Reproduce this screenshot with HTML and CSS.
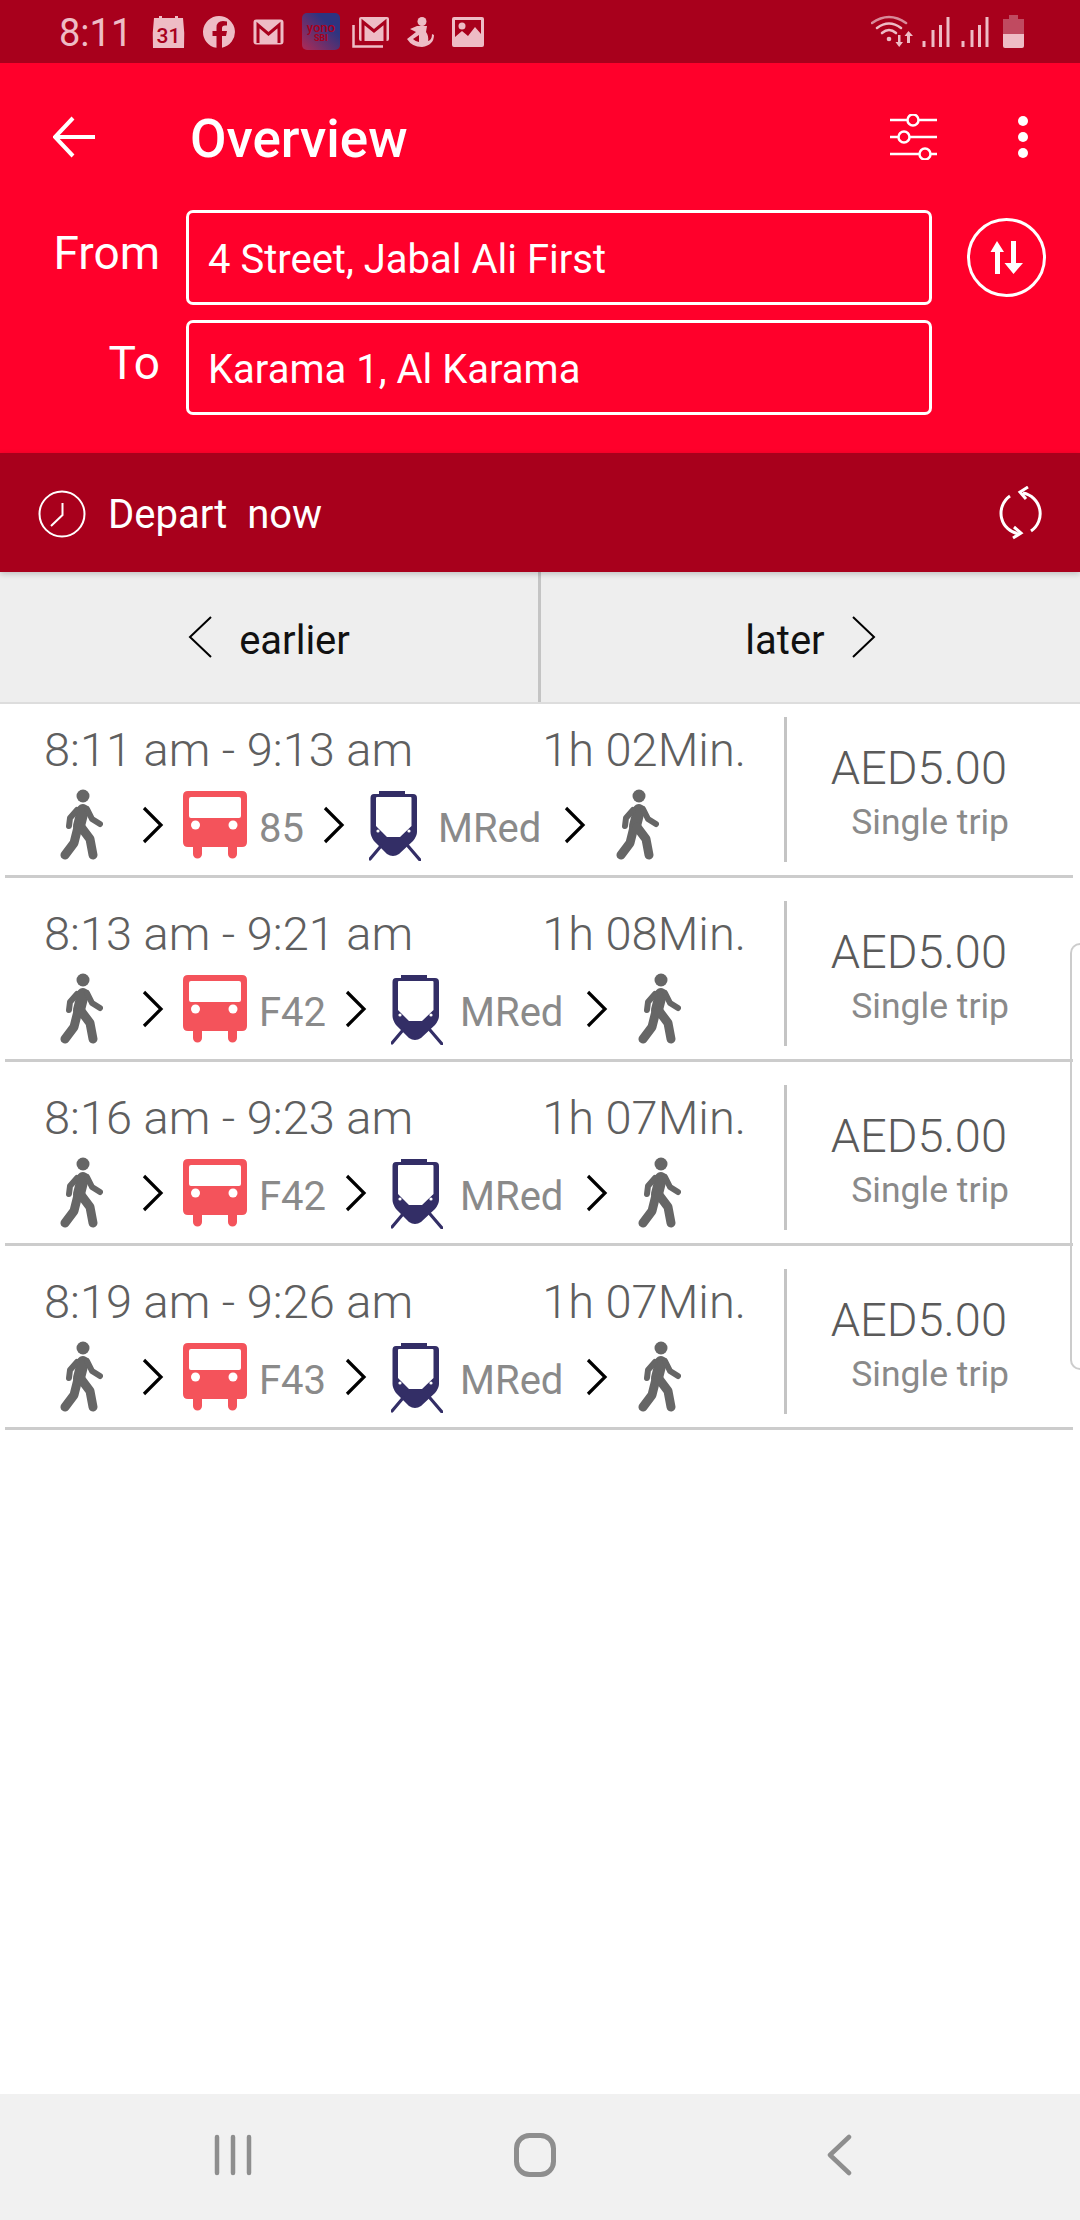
FILE: index.html
```html
<!DOCTYPE html>
<html lang="en">
<head>
    <meta charset="UTF-8">
    <meta name="viewport" content="width=device-width, initial-scale=1.0">
    <title>Overview</title>
    <link rel="stylesheet" href="styles.css">
</head>
<body>
    <!-- Shared icons -->
    <svg class="icon-defs" xmlns="http://www.w3.org/2000/svg">
        <symbol id="walk" viewBox="0 0 44 72">
            <circle cx="23" cy="7" r="6.5" fill="#666"/>
            <g fill="none" stroke="#666" stroke-linecap="round" stroke-linejoin="round">
                <path d="M23 21 L19 37" stroke-width="12"/>
                <path d="M17 21 L10 29 L9 37" stroke-width="6"/>
                <path d="M27 20 L32 30 L40 35" stroke-width="6"/>
                <path d="M18 38 L14 54 L5 66" stroke-width="9"/>
                <path d="M21 38 L30 50 L33 66" stroke-width="9"/>
            </g>
        </symbol>
        <symbol id="bus" viewBox="0 0 64 68">
            <path fill="#f4535b" fill-rule="evenodd" d="M5 0 H59 Q64 0 64 5 V51 Q64 56 59 56 H54 V63 A4.5 4.5 0 0 1 45 63 V56 H19 V63 A4.5 4.5 0 0 1 10 63 V56 H5 Q0 56 0 51 V5 Q0 0 5 0 Z M8 6 Q6 6 6 8 V25 Q6 27 8 27 H56 Q58 27 58 25 V8 Q58 6 56 6 Z"/>
            <circle cx="12.5" cy="34" r="4.5" fill="#fff"/>
            <circle cx="50" cy="34" r="4.5" fill="#fff"/>
        </symbol>
        <symbol id="train" viewBox="0 0 52 72">
            <rect x="10" y="2" width="26" height="4" fill="#332e66"/>
            <path fill="#332e66" fill-rule="evenodd" d="M1.5 9 Q1.5 5 5 5 H44 Q48 5 48 9 V43 Q48 47 44 52 L30 65 Q24 69 18 65 L5 52 Q1.5 47 1.5 43 Z M7 9 Q7 8 8 8 H41.5 Q42.5 8 42.5 9 V37 L31 48 H18 L7 37 Z"/>
            <circle cx="9" cy="42" r="1.6" fill="#fff"/>
            <circle cx="40" cy="42" r="1.6" fill="#fff"/>
            <path d="M1 70 L12 57 M51 71 L39 57" stroke="#332e66" stroke-width="3.2" stroke-linecap="round"/>
        </symbol>
        <symbol id="chev" viewBox="0 0 22 38">
            <path d="M2 2 L19 19 L2 36" fill="none" stroke="#000" stroke-width="3.2"/>
        </symbol>
    </svg>

    <div class="status-bar">
        <span class="status-time">8:11</span>
        <div class="status-icons">
            <svg width="33" height="34" viewBox="0 0 33 34"><path fill="#eebcc5" d="M2 3 H7 V1 H10 V3 H23 V1 H26 V3 H31 Q33 18 32 33 H1 Q0 18 2 3 Z"/><text x="16.5" y="28" class="cal-num">31</text></svg>
            <svg width="32" height="32" viewBox="0 0 32 32"><path fill="#eebcc5" d="M16 0 A16 16 0 0 1 19 31.7 V20 H23 L24 15 H19 V12 Q19 9.5 22 9.5 H24 V5.5 Q22 5 20 5 Q13.5 5 13.5 11.5 V15 H9.5 V20 H13.5 V31.8 A16 16 0 0 1 16 0 Z"/></svg>
            <svg width="31" height="26" viewBox="0 0 31 26"><rect x="1.5" y="1.5" width="28" height="23" rx="2" fill="#eebcc5" stroke="#eebcc5" stroke-width="2"/><path d="M5 24 V6 L15.5 15 L26 6 V24" fill="none" stroke="#a8001c" stroke-width="3"/></svg>
            <div class="yono"><span class="yono-name">yono</span><span class="yono-sbi">SBI</span></div>
            <svg class="gmail-stack" width="37" height="32" viewBox="0 0 37 32"><path d="M1.5 9 V30.5 H31" fill="none" stroke="#eebcc5" stroke-width="2.5"/><rect x="7" y="1" width="30" height="24" rx="2" fill="#eebcc5"/><path d="M11 25 V6 L22 15 L33 6 V25" fill="none" stroke="#a8001c" stroke-width="3"/></svg>
            <svg width="27" height="30" viewBox="0 0 27 30"><circle cx="15" cy="4.5" r="4.5" fill="#eebcc5"/><path fill="#eebcc5" d="M10 9 H20 L19 15 Q22 19 21 24 Q25 23 25 17 L27 18 Q27 28 15 30 Q5 30 0 22 L9 15 L3 12 Z M6 22 Q9 25 12 25 L12 18 Z"/></svg>
            <svg width="32" height="30" viewBox="0 0 32 30"><path fill="#eebcc5" fill-rule="evenodd" d="M2 0 H30 Q32 0 32 2 V28 Q32 30 30 30 H2 Q0 30 0 28 V2 Q0 0 2 0 Z M3 3 V20 L10 14 L16 19 L23 10 L29 17 V3 Z"/><circle cx="10" cy="9" r="3.5" fill="#eebcc5"/></svg>
        </div>
        <div class="status-right">
            <svg width="43" height="33" viewBox="0 0 43 33">
                <g fill="none" stroke-width="2.6" stroke-linecap="round">
                    <path d="M1 8 Q18 -4 35 8" stroke="#d88a99"/>
                    <path d="M6 13 Q18 4 30 13" stroke="#eebcc5"/>
                    <path d="M11 18 Q18 12 25 18" stroke="#eebcc5"/>
                </g>
                <circle cx="18" cy="24" r="2.3" fill="#eebcc5"/>
                <path fill="#eebcc5" d="M27 20 H29.5 V27 H32 L28.2 32 L24.5 27 H27 Z M36 28 V21 H33.5 L37.5 16 L42 21 H39 V28 Z"/>
            </svg>
            <svg class="signal" width="28" height="30" viewBox="0 0 28 30"><path d="M2 30 V24 M11 30 V13 M18.5 30 V8 M26 30 V0" stroke="#eebcc5" stroke-width="3"/></svg>
            <svg class="signal" width="28" height="30" viewBox="0 0 28 30"><path d="M2 30 V24 M11 30 V13 M18.5 30 V8 M26 30 V0" stroke="#eebcc5" stroke-width="3"/></svg>
            <svg class="battery" width="21" height="33" viewBox="0 0 21 33"><path fill="#c04a60" d="M6 0 H15 V4 H21 V20 H0 V4 H6 Z"/><path fill="#eebcc5" d="M0 19 H21 V31 Q21 33 19 33 H2 Q0 33 0 31 Z"/></svg>
        </div>
    </div>

    <div class="header">
        <div class="header-top">
            <svg class="back-arrow" width="42" height="42" viewBox="0 0 42 42"><path d="M20 2 L2 21 L20 40 M2 21 H42" fill="none" stroke="#fff" stroke-width="4"/></svg>
            <h1 class="title">Overview</h1>
            <svg class="sliders" width="47" height="46" viewBox="0 0 47 46">
                <path d="M0 6 H47 M0 23 H47 M0 40 H47" stroke="#fff" stroke-width="2.5"/>
                <g fill="#ff002b" stroke="#fff" stroke-width="2.5">
                    <circle cx="23" cy="6" r="5.5"/>
                    <circle cx="14" cy="23" r="5.5"/>
                    <circle cx="35" cy="40" r="5.5"/>
                </g>
            </svg>
            <svg class="more" width="10" height="42" viewBox="0 0 10 42"><circle cx="5" cy="5" r="5" fill="#fff"/><circle cx="5" cy="21" r="5" fill="#fff"/><circle cx="5" cy="37" r="5" fill="#fff"/></svg>
        </div>
        <div class="route">
            <div class="route-fields">
                <div class="route-row">
                    <span class="route-label">From</span>
                    <div class="route-input">4 Street, Jabal Ali First</div>
                </div>
                <div class="route-row">
                    <span class="route-label">To</span>
                    <div class="route-input">Karama 1, Al Karama</div>
                </div>
            </div>
            <div class="swap">
                <svg width="34" height="34" viewBox="0 0 34 34"><path fill="#fff" d="M7 0 L14 11 H10 V33 H5 V11 H0.5 Z M21 0 H26 V22 H33 L23.5 33 L14.5 22 H21 Z"/></svg>
            </div>
        </div>
    </div>

    <div class="depart-bar">
        <svg class="clock" width="48" height="48" viewBox="0 0 48 48"><circle cx="24" cy="24" r="22.5" fill="none" stroke="#fff" stroke-width="2"/><path d="M24.5 13 V25 L13 36" fill="none" stroke="#fff" stroke-width="2"/></svg>
        <span class="depart-text">Depart&nbsp; now</span>
        <svg class="refresh" width="46" height="54" viewBox="0 -3 46 54">
            <path d="M11 7 A21 21 0 0 0 20 45 M32 42 A21 21 0 0 0 24 4" fill="none" stroke="#fff" stroke-width="3"/>
            <path d="M15 38 L22 44 L14 49 M29 -2 L21 3 L27 10" fill="none" stroke="#fff" stroke-width="3"/>
        </svg>
    </div>

    <div class="tabs">
        <div class="tab">
            <svg class="tab-chev" width="25" height="42" viewBox="0 0 25 42"><path d="M23 1 L2 21 L23 41" fill="none" stroke="#000" stroke-width="2"/></svg>
            <span>earlier</span>
        </div>
        <div class="tab">
            <span>later</span>
            <svg class="tab-chev" width="25" height="42" viewBox="0 0 25 42"><path d="M2 1 L23 21 L2 41" fill="none" stroke="#000" stroke-width="2"/></svg>
        </div>
    </div>

    <div class="trips">
        <div class="trip">
            <div class="trip-main">
                <div class="trip-times">
                    <span>8:11 am - 9:13 am</span>
                    <span>1h 02Min.</span>
                </div>
                <div class="trip-legs">
                    <svg class="walk"><use href="#walk"/></svg>
                    <svg class="chev"><use href="#chev"/></svg>
                    <svg class="bus"><use href="#bus"/></svg>
                    <span class="line-name">85</span>
                    <svg class="chev"><use href="#chev"/></svg>
                    <svg class="train"><use href="#train"/></svg>
                    <span class="line-name">MRed</span>
                    <svg class="chev"><use href="#chev"/></svg>
                    <svg class="walk"><use href="#walk"/></svg>
                </div>
            </div>
            <div class="trip-fare">
                <span class="fare-price">AED5.00</span>
                <span class="fare-type">Single trip</span>
            </div>
        </div>
        <div class="trip">
            <div class="trip-main">
                <div class="trip-times">
                    <span>8:13 am - 9:21 am</span>
                    <span>1h 08Min.</span>
                </div>
                <div class="trip-legs">
                    <svg class="walk"><use href="#walk"/></svg>
                    <svg class="chev"><use href="#chev"/></svg>
                    <svg class="bus"><use href="#bus"/></svg>
                    <span class="line-name">F42</span>
                    <svg class="chev"><use href="#chev"/></svg>
                    <svg class="train"><use href="#train"/></svg>
                    <span class="line-name">MRed</span>
                    <svg class="chev"><use href="#chev"/></svg>
                    <svg class="walk"><use href="#walk"/></svg>
                </div>
            </div>
            <div class="trip-fare">
                <span class="fare-price">AED5.00</span>
                <span class="fare-type">Single trip</span>
            </div>
        </div>
        <div class="trip">
            <div class="trip-main">
                <div class="trip-times">
                    <span>8:16 am - 9:23 am</span>
                    <span>1h 07Min.</span>
                </div>
                <div class="trip-legs">
                    <svg class="walk"><use href="#walk"/></svg>
                    <svg class="chev"><use href="#chev"/></svg>
                    <svg class="bus"><use href="#bus"/></svg>
                    <span class="line-name">F42</span>
                    <svg class="chev"><use href="#chev"/></svg>
                    <svg class="train"><use href="#train"/></svg>
                    <span class="line-name">MRed</span>
                    <svg class="chev"><use href="#chev"/></svg>
                    <svg class="walk"><use href="#walk"/></svg>
                </div>
            </div>
            <div class="trip-fare">
                <span class="fare-price">AED5.00</span>
                <span class="fare-type">Single trip</span>
            </div>
        </div>
        <div class="trip">
            <div class="trip-main">
                <div class="trip-times">
                    <span>8:19 am - 9:26 am</span>
                    <span>1h 07Min.</span>
                </div>
                <div class="trip-legs">
                    <svg class="walk"><use href="#walk"/></svg>
                    <svg class="chev"><use href="#chev"/></svg>
                    <svg class="bus"><use href="#bus"/></svg>
                    <span class="line-name">F43</span>
                    <svg class="chev"><use href="#chev"/></svg>
                    <svg class="train"><use href="#train"/></svg>
                    <span class="line-name">MRed</span>
                    <svg class="chev"><use href="#chev"/></svg>
                    <svg class="walk"><use href="#walk"/></svg>
                </div>
            </div>
            <div class="trip-fare">
                <span class="fare-price">AED5.00</span>
                <span class="fare-type">Single trip</span>
            </div>
        </div>
    </div>

    <!-- Edge panel handle lies over the list -->
    <div class="edge-handle"></div>

    <div class="nav-bar">
        <svg width="40" height="42" viewBox="0 0 40 42"><path d="M4 3 V39 M20 3 V39 M36 3 V39" stroke="#8e8e8e" stroke-width="4.5" stroke-linecap="round"/></svg>
        <svg width="42" height="44" viewBox="0 0 42 44"><rect x="2.5" y="2.5" width="37" height="39" rx="13" fill="none" stroke="#8e8e8e" stroke-width="5"/></svg>
        <svg width="26" height="42" viewBox="0 0 26 42"><path d="M23 3 L4 21 L23 39" fill="none" stroke="#8e8e8e" stroke-width="4.5" stroke-linecap="round" stroke-linejoin="round"/></svg>
    </div>
</body>
</html>
```

FILE: styles.css
```css
body {
    margin: 0;
    padding: 0;
    width: 1080px;
    height: 2220px;
    position: relative;
    overflow: hidden;
    font-family: 'Roboto', sans-serif;
    background: #fff;
    display: flex;
    flex-direction: column;
}

.icon-defs {
    display: none;
}

svg {
    display: block;
    flex-shrink: 0;
}

.status-bar {
    height: 63px;
    background: #a8001c;
    color: #eebcc5;
    display: flex;
    align-items: center;
    padding: 0 56px 0 59px;
    box-sizing: border-box;
}

.status-time {
    font-size: 38px;
    width: 93px;
    margin-top: 3px;
}

.status-icons {
    display: flex;
    align-items: center;
    gap: 18px;
    flex: 1;
}

.gmail-stack {
    margin-left: -6px;
}

.cal-num {
    font-size: 21px;
    font-weight: 500;
    fill: #a8001c;
    text-anchor: middle;
}

.yono {
    width: 38px;
    height: 37px;
    border-radius: 5px;
    background: linear-gradient(45deg, #b02a55, #2d3480 70%);
    color: #a8001c;
    display: flex;
    flex-direction: column;
    align-items: center;
    justify-content: center;
    line-height: 1;
}

.yono-name {
    font-size: 13px;
    font-weight: 500;
}

.yono-sbi {
    font-size: 9px;
    font-weight: 700;
}

.status-right {
    display: flex;
    align-items: center;
    gap: 11px;
}

.status-right .signal:nth-child(2) {
    margin-left: -3px;
}

.status-right .battery {
    margin-left: 3px;
}

.header {
    background: #ff002b;
    height: 390px;
    box-sizing: border-box;
    padding-top: 53px;
}

.header-top {
    display: flex;
    align-items: center;
    height: 42px;
    padding-left: 53px;
}

.title {
    margin: 4px 0 0 95px;
    font-size: 53px;
    font-weight: 500;
    color: #fff;
    flex: 1;
}

.sliders {
    margin-right: 81px;
}

.more {
    margin-right: 52px;
}

.route {
    display: flex;
    align-items: center;
    margin-top: 52px;
}

.route-fields {
    display: flex;
    flex-direction: column;
    gap: 15px;
}

.route-row {
    display: flex;
    align-items: center;
}

.route-label {
    width: 160px;
    text-align: right;
    font-size: 46px;
    color: #fff;
    margin-right: 26px;
    margin-top: -10px;
}

.route-input {
    width: 746px;
    height: 95px;
    box-sizing: border-box;
    border: 3px solid #fff;
    border-radius: 7px;
    padding: 3px 0 0 19px;
    display: flex;
    align-items: center;
    font-size: 40px;
    color: #fff;
}

.swap {
    width: 79px;
    height: 79px;
    box-sizing: border-box;
    border: 3px solid #fff;
    border-radius: 50%;
    margin: -110px 0 0 35px;
    display: flex;
    align-items: center;
    justify-content: center;
}

.depart-bar {
    height: 119px;
    background: #a8001c;
    display: flex;
    align-items: center;
    padding: 0 35px 0 38px;
    color: #fff;
    box-shadow: 0 2px 6px rgba(0,0,0,0.2);
    position: relative;
}

.clock {
    margin-top: 2px;
}

.depart-text {
    font-size: 40px;
    margin: 4px 0 0 22px;
    flex: 1;
}

.tabs {
    height: 132px;
    background: #eee;
    display: flex;
    border-bottom: 2px solid #ddd;
    box-sizing: border-box;
}

.tab {
    flex: 1;
    box-sizing: border-box;
    display: flex;
    align-items: center;
    justify-content: center;
    gap: 26px;
    font-size: 40px;
    color: #111;
}

.tab span {
    margin-top: 6px;
}

.tab:first-child {
    flex: 0 0 541px;
    border-right: 3px solid #c4c4c4;
}

.trip {
    display: flex;
    margin: 0 7px 0 5px;
    height: 184px;
    box-sizing: border-box;
    padding-top: 23px;
    border-bottom: 3px solid #ccc;
}

.trip:first-child {
    height: 174px;
    padding-top: 13px;
}

.trip-main {
    width: 779px;
    box-sizing: border-box;
    padding-left: 39px;
    padding-right: 38px;
    flex-shrink: 0;
}

.trip-times {
    display: flex;
    justify-content: space-between;
    font-size: 47px;
    font-weight: 300;
    color: #5f5f5f;
    line-height: 50px;
    margin-top: 8px;
}

.trip-legs {
    display: flex;
    align-items: center;
    margin-top: 16px;
    height: 68px;
    color: #8a8a8a;
}

.walk {
    width: 44px;
    height: 72px;
    margin-left: 16px;
    filter: blur(0.5px);
}

.chev {
    width: 22px;
    height: 38px;
    margin-left: 38px;
}

.bus {
    width: 64px;
    height: 68px;
    margin-left: 19px;
    filter: blur(0.4px);
}

.line-name {
    font-size: 40px;
    margin: 6px 0 0 12px;
}

.train {
    width: 52px;
    height: 72px;
    margin-left: 24px;
    filter: blur(0.4px);
}

.train + .line-name {
    margin-left: 17px;
}

.line-name + .chev {
    margin-left: 19px;
}

.train + .line-name + .chev {
    margin-left: 23px;
}

.chev + .walk {
    margin-left: 30px;
}

.trip-fare {
    flex: 1;
    border-left: 3px solid #c4c4c4;
    margin-bottom: 13px;
    display: flex;
    flex-direction: column;
    align-items: flex-end;
    padding-right: 66px;
    padding-top: 25px;
}

.fare-price {
    font-size: 47px;
    font-weight: 300;
    color: #5a5a5a;
    line-height: 52px;
}

.fare-type {
    font-size: 35.5px;
    color: #8a8a8a;
    line-height: 40px;
    margin: 8px -2px 0 0;
}

.edge-handle {
    position: absolute;
    right: 0;
    top: 943px;
    width: 10px;
    height: 427px;
    box-sizing: border-box;
    border: 2px solid #ccc;
    border-right: none;
    border-radius: 12px 0 0 12px;
}

.nav-bar {
    position: absolute;
    left: 0;
    right: 0;
    bottom: 0;
    height: 126px;
    box-sizing: border-box;
    padding-bottom: 4px;
    background: #f1f1f1;
    display: flex;
    align-items: center;
}

.nav-bar svg:nth-child(1) {
    margin-left: 213px;
}

.nav-bar svg:nth-child(2) {
    margin-left: 261px;
}

.nav-bar svg:nth-child(3) {
    margin-left: 270px;
}
```
